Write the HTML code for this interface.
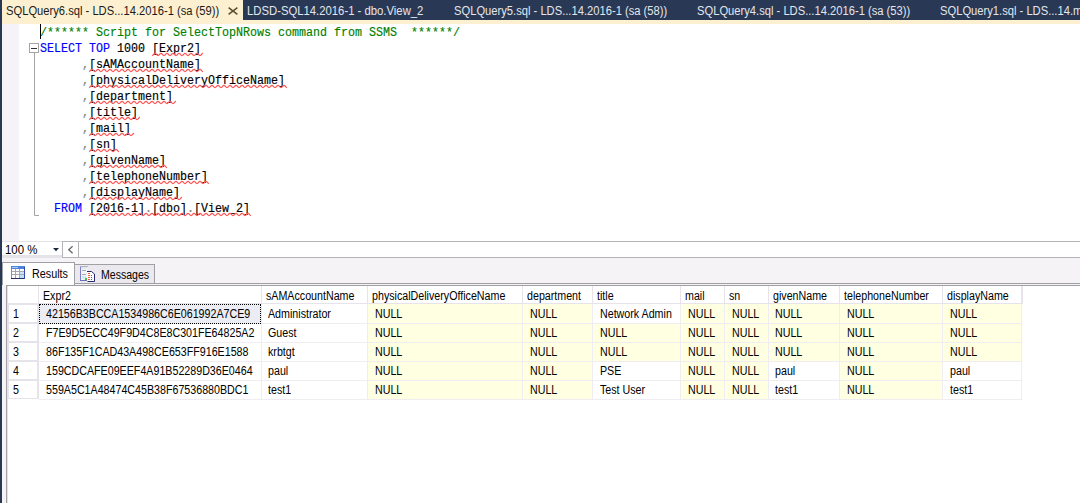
<!DOCTYPE html>
<html><head><meta charset="utf-8">
<style>
*{margin:0;padding:0;box-sizing:border-box}
html,body{width:1080px;height:503px;overflow:hidden;background:#fff;position:relative;font-family:"Liberation Sans",sans-serif}
.abs{position:absolute}
#navyL{left:0;top:0;width:2px;height:503px;background:#293955}
#tabs{left:0;top:0;width:1080px;height:20px;background:#293955}
.tt{position:absolute;top:4px;font-size:12px;line-height:14px;white-space:nowrap;transform:scaleX(0.932);transform-origin:0 0;color:#e4e6ec}
#atab{left:2px;top:0;width:241px;height:20px;background:#fdf0d0}
#cream{left:2px;top:20px;width:1078px;height:4px;background:#fdf0d0}
#editor{left:2px;top:24px;width:1078px;height:217px;background:#fff}
#gm{left:2px;top:24px;width:17px;height:217px;background:#f5f3f7}
.code{position:absolute;left:40px;font-family:"Liberation Mono",monospace;font-size:12.5px;line-height:16px;white-space:pre;color:#000;transform:scaleX(0.93333);transform-origin:0 0;-webkit-text-stroke:0.15px}
.kw{color:#0000ff}.cm{color:#008000}.gr{color:#808080}
#zoombar{left:2px;top:241px;width:1078px;height:17px;background:#fff;border-top:1px solid #e4e2e8}
#zcombo{left:2px;top:242px;width:59px;height:13px}
#zstrip{left:2px;top:255px;width:60px;height:3px;background:#e5e3e8}
#hsb{left:62px;top:241px;width:1018px;height:17px;border:1px solid #b9b9bd;border-right:none;background:#fff}
#hsbbtn{left:62px;top:241px;width:17px;height:17px;border:1px solid #b9b9bd;background:#fff}
#rtabs{left:2px;top:258px;width:1078px;height:27px;background:#f5f3f7}
#grid{left:6px;top:285px;width:1074px;height:218px;background:#fff;border-top:1px solid #a0a0a4;border-left:1px solid #a0a0a4}
.g{position:absolute;font-size:12px;line-height:13px;white-space:nowrap;color:#000;transform:scaleX(0.89);transform-origin:0 0}
</style></head><body>
<div id="navyL" class="abs"></div>
<div id="tabs" class="abs"></div>
<div id="atab" class="abs"></div>
<div id="cream" class="abs"></div>
<div class="tt" style="left:6px;color:#1a1a1a">SQLQuery6.sql - LDS...14.2016-1 (sa (59))</div>
<svg class="abs" style="left:228px;top:7px" width="10" height="8" viewBox="0 0 10 8"><path d="M0.6,0.6 L9.4,7.4 M9.4,0.6 L0.6,7.4" stroke="#5c4d2e" stroke-width="1.5"/></svg>
<div class="tt" style="left:247px;transform:scaleX(0.942)">LDSD-SQL14.2016-1 - dbo.View_2</div>
<div class="tt" style="left:454px">SQLQuery5.sql - LDS...14.2016-1 (sa (58))</div>
<div class="tt" style="left:697px">SQLQuery4.sql - LDS...14.2016-1 (sa (53))</div>
<div class="tt" style="left:940px">SQLQuery1.sql - LDS...14.m</div>

<div id="editor" class="abs"></div>
<div id="gm" class="abs"></div>
<div class="code" style="top:25px"><span class="cm">/****** Script for SelectTopNRows command from SSMS  ******/</span>
<span class="kw">SELECT</span> <span class="kw">TOP</span> 1000 [Expr2]
      <span class="gr">,</span>[sAMAccountName]
      <span class="gr">,</span>[physicalDeliveryOfficeName]
      <span class="gr">,</span>[department]
      <span class="gr">,</span>[title]
      <span class="gr">,</span>[mail]
      <span class="gr">,</span>[sn]
      <span class="gr">,</span>[givenName]
      <span class="gr">,</span>[telephoneNumber]
      <span class="gr">,</span>[displayName]
  <span class="kw">FROM</span> [2016-1]<span class="gr">.</span>[dbo]<span class="gr">.</span>[View_2]</div>
<svg class="abs" style="left:0;top:0" width="1080" height="241"><path d="M152,55.6 C153.5,55.6 153.5,53.4 155,53.4 C156.5,53.4 156.5,55.6 158,55.6 C159.5,55.6 159.5,53.4 161,53.4 C162.5,53.4 162.5,55.6 164,55.6 C165.5,55.6 165.5,53.4 167,53.4 C168.5,53.4 168.5,55.6 170,55.6 C171.5,55.6 171.5,53.4 173,53.4 C174.5,53.4 174.5,55.6 176,55.6 C177.5,55.6 177.5,53.4 179,53.4 C180.5,53.4 180.5,55.6 182,55.6 C183.5,55.6 183.5,53.4 185,53.4 C186.5,53.4 186.5,55.6 188,55.6 C189.5,55.6 189.5,53.4 191,53.4 C192.5,53.4 192.5,55.6 194,55.6 C195.5,55.6 195.5,53.4 197,53.4 C198.5,53.4 198.5,55.6 200,55.6 C201.5,55.6 201.5,53.4 203,53.4 M89,71.6 C90.5,71.6 90.5,69.4 92,69.4 C93.5,69.4 93.5,71.6 95,71.6 C96.5,71.6 96.5,69.4 98,69.4 C99.5,69.4 99.5,71.6 101,71.6 C102.5,71.6 102.5,69.4 104,69.4 C105.5,69.4 105.5,71.6 107,71.6 C108.5,71.6 108.5,69.4 110,69.4 C111.5,69.4 111.5,71.6 113,71.6 C114.5,71.6 114.5,69.4 116,69.4 C117.5,69.4 117.5,71.6 119,71.6 C120.5,71.6 120.5,69.4 122,69.4 C123.5,69.4 123.5,71.6 125,71.6 C126.5,71.6 126.5,69.4 128,69.4 C129.5,69.4 129.5,71.6 131,71.6 C132.5,71.6 132.5,69.4 134,69.4 C135.5,69.4 135.5,71.6 137,71.6 C138.5,71.6 138.5,69.4 140,69.4 C141.5,69.4 141.5,71.6 143,71.6 C144.5,71.6 144.5,69.4 146,69.4 C147.5,69.4 147.5,71.6 149,71.6 C150.5,71.6 150.5,69.4 152,69.4 C153.5,69.4 153.5,71.6 155,71.6 C156.5,71.6 156.5,69.4 158,69.4 C159.5,69.4 159.5,71.6 161,71.6 C162.5,71.6 162.5,69.4 164,69.4 C165.5,69.4 165.5,71.6 167,71.6 C168.5,71.6 168.5,69.4 170,69.4 C171.5,69.4 171.5,71.6 173,71.6 C174.5,71.6 174.5,69.4 176,69.4 C177.5,69.4 177.5,71.6 179,71.6 C180.5,71.6 180.5,69.4 182,69.4 C183.5,69.4 183.5,71.6 185,71.6 C186.5,71.6 186.5,69.4 188,69.4 C189.5,69.4 189.5,71.6 191,71.6 C192.5,71.6 192.5,69.4 194,69.4 C195.5,69.4 195.5,71.6 197,71.6 C198.5,71.6 198.5,69.4 200,69.4 C201.5,69.4 201.5,71.6 203,71.6 M89,87.6 C90.5,87.6 90.5,85.4 92,85.4 C93.5,85.4 93.5,87.6 95,87.6 C96.5,87.6 96.5,85.4 98,85.4 C99.5,85.4 99.5,87.6 101,87.6 C102.5,87.6 102.5,85.4 104,85.4 C105.5,85.4 105.5,87.6 107,87.6 C108.5,87.6 108.5,85.4 110,85.4 C111.5,85.4 111.5,87.6 113,87.6 C114.5,87.6 114.5,85.4 116,85.4 C117.5,85.4 117.5,87.6 119,87.6 C120.5,87.6 120.5,85.4 122,85.4 C123.5,85.4 123.5,87.6 125,87.6 C126.5,87.6 126.5,85.4 128,85.4 C129.5,85.4 129.5,87.6 131,87.6 C132.5,87.6 132.5,85.4 134,85.4 C135.5,85.4 135.5,87.6 137,87.6 C138.5,87.6 138.5,85.4 140,85.4 C141.5,85.4 141.5,87.6 143,87.6 C144.5,87.6 144.5,85.4 146,85.4 C147.5,85.4 147.5,87.6 149,87.6 C150.5,87.6 150.5,85.4 152,85.4 C153.5,85.4 153.5,87.6 155,87.6 C156.5,87.6 156.5,85.4 158,85.4 C159.5,85.4 159.5,87.6 161,87.6 C162.5,87.6 162.5,85.4 164,85.4 C165.5,85.4 165.5,87.6 167,87.6 C168.5,87.6 168.5,85.4 170,85.4 C171.5,85.4 171.5,87.6 173,87.6 C174.5,87.6 174.5,85.4 176,85.4 C177.5,85.4 177.5,87.6 179,87.6 C180.5,87.6 180.5,85.4 182,85.4 C183.5,85.4 183.5,87.6 185,87.6 C186.5,87.6 186.5,85.4 188,85.4 C189.5,85.4 189.5,87.6 191,87.6 C192.5,87.6 192.5,85.4 194,85.4 C195.5,85.4 195.5,87.6 197,87.6 C198.5,87.6 198.5,85.4 200,85.4 C201.5,85.4 201.5,87.6 203,87.6 C204.5,87.6 204.5,85.4 206,85.4 C207.5,85.4 207.5,87.6 209,87.6 C210.5,87.6 210.5,85.4 212,85.4 C213.5,85.4 213.5,87.6 215,87.6 C216.5,87.6 216.5,85.4 218,85.4 C219.5,85.4 219.5,87.6 221,87.6 C222.5,87.6 222.5,85.4 224,85.4 C225.5,85.4 225.5,87.6 227,87.6 C228.5,87.6 228.5,85.4 230,85.4 C231.5,85.4 231.5,87.6 233,87.6 C234.5,87.6 234.5,85.4 236,85.4 C237.5,85.4 237.5,87.6 239,87.6 C240.5,87.6 240.5,85.4 242,85.4 C243.5,85.4 243.5,87.6 245,87.6 C246.5,87.6 246.5,85.4 248,85.4 C249.5,85.4 249.5,87.6 251,87.6 C252.5,87.6 252.5,85.4 254,85.4 C255.5,85.4 255.5,87.6 257,87.6 C258.5,87.6 258.5,85.4 260,85.4 C261.5,85.4 261.5,87.6 263,87.6 C264.5,87.6 264.5,85.4 266,85.4 C267.5,85.4 267.5,87.6 269,87.6 C270.5,87.6 270.5,85.4 272,85.4 C273.5,85.4 273.5,87.6 275,87.6 C276.5,87.6 276.5,85.4 278,85.4 C279.5,85.4 279.5,87.6 281,87.6 C282.5,87.6 282.5,85.4 284,85.4 C285.5,85.4 285.5,87.6 287,87.6 M89,103.6 C90.5,103.6 90.5,101.4 92,101.4 C93.5,101.4 93.5,103.6 95,103.6 C96.5,103.6 96.5,101.4 98,101.4 C99.5,101.4 99.5,103.6 101,103.6 C102.5,103.6 102.5,101.4 104,101.4 C105.5,101.4 105.5,103.6 107,103.6 C108.5,103.6 108.5,101.4 110,101.4 C111.5,101.4 111.5,103.6 113,103.6 C114.5,103.6 114.5,101.4 116,101.4 C117.5,101.4 117.5,103.6 119,103.6 C120.5,103.6 120.5,101.4 122,101.4 C123.5,101.4 123.5,103.6 125,103.6 C126.5,103.6 126.5,101.4 128,101.4 C129.5,101.4 129.5,103.6 131,103.6 C132.5,103.6 132.5,101.4 134,101.4 C135.5,101.4 135.5,103.6 137,103.6 C138.5,103.6 138.5,101.4 140,101.4 C141.5,101.4 141.5,103.6 143,103.6 C144.5,103.6 144.5,101.4 146,101.4 C147.5,101.4 147.5,103.6 149,103.6 C150.5,103.6 150.5,101.4 152,101.4 C153.5,101.4 153.5,103.6 155,103.6 C156.5,103.6 156.5,101.4 158,101.4 C159.5,101.4 159.5,103.6 161,103.6 C162.5,103.6 162.5,101.4 164,101.4 C165.5,101.4 165.5,103.6 167,103.6 C168.5,103.6 168.5,101.4 170,101.4 C171.5,101.4 171.5,103.6 173,103.6 C174.5,103.6 174.5,101.4 176,101.4 M89,119.6 C90.5,119.6 90.5,117.4 92,117.4 C93.5,117.4 93.5,119.6 95,119.6 C96.5,119.6 96.5,117.4 98,117.4 C99.5,117.4 99.5,119.6 101,119.6 C102.5,119.6 102.5,117.4 104,117.4 C105.5,117.4 105.5,119.6 107,119.6 C108.5,119.6 108.5,117.4 110,117.4 C111.5,117.4 111.5,119.6 113,119.6 C114.5,119.6 114.5,117.4 116,117.4 C117.5,117.4 117.5,119.6 119,119.6 C120.5,119.6 120.5,117.4 122,117.4 C123.5,117.4 123.5,119.6 125,119.6 C126.5,119.6 126.5,117.4 128,117.4 C129.5,117.4 129.5,119.6 131,119.6 C132.5,119.6 132.5,117.4 134,117.4 C135.5,117.4 135.5,119.6 137,119.6 C138.5,119.6 138.5,117.4 140,117.4 M89,135.6 C90.5,135.6 90.5,133.4 92,133.4 C93.5,133.4 93.5,135.6 95,135.6 C96.5,135.6 96.5,133.4 98,133.4 C99.5,133.4 99.5,135.6 101,135.6 C102.5,135.6 102.5,133.4 104,133.4 C105.5,133.4 105.5,135.6 107,135.6 C108.5,135.6 108.5,133.4 110,133.4 C111.5,133.4 111.5,135.6 113,135.6 C114.5,135.6 114.5,133.4 116,133.4 C117.5,133.4 117.5,135.6 119,135.6 C120.5,135.6 120.5,133.4 122,133.4 C123.5,133.4 123.5,135.6 125,135.6 C126.5,135.6 126.5,133.4 128,133.4 C129.5,133.4 129.5,135.6 131,135.6 C132.5,135.6 132.5,133.4 134,133.4 M89,151.6 C90.5,151.6 90.5,149.4 92,149.4 C93.5,149.4 93.5,151.6 95,151.6 C96.5,151.6 96.5,149.4 98,149.4 C99.5,149.4 99.5,151.6 101,151.6 C102.5,151.6 102.5,149.4 104,149.4 C105.5,149.4 105.5,151.6 107,151.6 C108.5,151.6 108.5,149.4 110,149.4 C111.5,149.4 111.5,151.6 113,151.6 C114.5,151.6 114.5,149.4 116,149.4 C117.5,149.4 117.5,151.6 119,151.6 M89,167.6 C90.5,167.6 90.5,165.4 92,165.4 C93.5,165.4 93.5,167.6 95,167.6 C96.5,167.6 96.5,165.4 98,165.4 C99.5,165.4 99.5,167.6 101,167.6 C102.5,167.6 102.5,165.4 104,165.4 C105.5,165.4 105.5,167.6 107,167.6 C108.5,167.6 108.5,165.4 110,165.4 C111.5,165.4 111.5,167.6 113,167.6 C114.5,167.6 114.5,165.4 116,165.4 C117.5,165.4 117.5,167.6 119,167.6 C120.5,167.6 120.5,165.4 122,165.4 C123.5,165.4 123.5,167.6 125,167.6 C126.5,167.6 126.5,165.4 128,165.4 C129.5,165.4 129.5,167.6 131,167.6 C132.5,167.6 132.5,165.4 134,165.4 C135.5,165.4 135.5,167.6 137,167.6 C138.5,167.6 138.5,165.4 140,165.4 C141.5,165.4 141.5,167.6 143,167.6 C144.5,167.6 144.5,165.4 146,165.4 C147.5,165.4 147.5,167.6 149,167.6 C150.5,167.6 150.5,165.4 152,165.4 C153.5,165.4 153.5,167.6 155,167.6 C156.5,167.6 156.5,165.4 158,165.4 C159.5,165.4 159.5,167.6 161,167.6 C162.5,167.6 162.5,165.4 164,165.4 C165.5,165.4 165.5,167.6 167,167.6 M89,183.6 C90.5,183.6 90.5,181.4 92,181.4 C93.5,181.4 93.5,183.6 95,183.6 C96.5,183.6 96.5,181.4 98,181.4 C99.5,181.4 99.5,183.6 101,183.6 C102.5,183.6 102.5,181.4 104,181.4 C105.5,181.4 105.5,183.6 107,183.6 C108.5,183.6 108.5,181.4 110,181.4 C111.5,181.4 111.5,183.6 113,183.6 C114.5,183.6 114.5,181.4 116,181.4 C117.5,181.4 117.5,183.6 119,183.6 C120.5,183.6 120.5,181.4 122,181.4 C123.5,181.4 123.5,183.6 125,183.6 C126.5,183.6 126.5,181.4 128,181.4 C129.5,181.4 129.5,183.6 131,183.6 C132.5,183.6 132.5,181.4 134,181.4 C135.5,181.4 135.5,183.6 137,183.6 C138.5,183.6 138.5,181.4 140,181.4 C141.5,181.4 141.5,183.6 143,183.6 C144.5,183.6 144.5,181.4 146,181.4 C147.5,181.4 147.5,183.6 149,183.6 C150.5,183.6 150.5,181.4 152,181.4 C153.5,181.4 153.5,183.6 155,183.6 C156.5,183.6 156.5,181.4 158,181.4 C159.5,181.4 159.5,183.6 161,183.6 C162.5,183.6 162.5,181.4 164,181.4 C165.5,181.4 165.5,183.6 167,183.6 C168.5,183.6 168.5,181.4 170,181.4 C171.5,181.4 171.5,183.6 173,183.6 C174.5,183.6 174.5,181.4 176,181.4 C177.5,181.4 177.5,183.6 179,183.6 C180.5,183.6 180.5,181.4 182,181.4 C183.5,181.4 183.5,183.6 185,183.6 C186.5,183.6 186.5,181.4 188,181.4 C189.5,181.4 189.5,183.6 191,183.6 C192.5,183.6 192.5,181.4 194,181.4 C195.5,181.4 195.5,183.6 197,183.6 C198.5,183.6 198.5,181.4 200,181.4 C201.5,181.4 201.5,183.6 203,183.6 C204.5,183.6 204.5,181.4 206,181.4 C207.5,181.4 207.5,183.6 209,183.6 M89,199.6 C90.5,199.6 90.5,197.4 92,197.4 C93.5,197.4 93.5,199.6 95,199.6 C96.5,199.6 96.5,197.4 98,197.4 C99.5,197.4 99.5,199.6 101,199.6 C102.5,199.6 102.5,197.4 104,197.4 C105.5,197.4 105.5,199.6 107,199.6 C108.5,199.6 108.5,197.4 110,197.4 C111.5,197.4 111.5,199.6 113,199.6 C114.5,199.6 114.5,197.4 116,197.4 C117.5,197.4 117.5,199.6 119,199.6 C120.5,199.6 120.5,197.4 122,197.4 C123.5,197.4 123.5,199.6 125,199.6 C126.5,199.6 126.5,197.4 128,197.4 C129.5,197.4 129.5,199.6 131,199.6 C132.5,199.6 132.5,197.4 134,197.4 C135.5,197.4 135.5,199.6 137,199.6 C138.5,199.6 138.5,197.4 140,197.4 C141.5,197.4 141.5,199.6 143,199.6 C144.5,199.6 144.5,197.4 146,197.4 C147.5,197.4 147.5,199.6 149,199.6 C150.5,199.6 150.5,197.4 152,197.4 C153.5,197.4 153.5,199.6 155,199.6 C156.5,199.6 156.5,197.4 158,197.4 C159.5,197.4 159.5,199.6 161,199.6 C162.5,199.6 162.5,197.4 164,197.4 C165.5,197.4 165.5,199.6 167,199.6 C168.5,199.6 168.5,197.4 170,197.4 C171.5,197.4 171.5,199.6 173,199.6 C174.5,199.6 174.5,197.4 176,197.4 C177.5,197.4 177.5,199.6 179,199.6 C180.5,199.6 180.5,197.4 182,197.4 M89,215.6 C90.5,215.6 90.5,213.4 92,213.4 C93.5,213.4 93.5,215.6 95,215.6 C96.5,215.6 96.5,213.4 98,213.4 C99.5,213.4 99.5,215.6 101,215.6 C102.5,215.6 102.5,213.4 104,213.4 C105.5,213.4 105.5,215.6 107,215.6 C108.5,215.6 108.5,213.4 110,213.4 C111.5,213.4 111.5,215.6 113,215.6 C114.5,215.6 114.5,213.4 116,213.4 C117.5,213.4 117.5,215.6 119,215.6 C120.5,215.6 120.5,213.4 122,213.4 C123.5,213.4 123.5,215.6 125,215.6 C126.5,215.6 126.5,213.4 128,213.4 C129.5,213.4 129.5,215.6 131,215.6 C132.5,215.6 132.5,213.4 134,213.4 C135.5,213.4 135.5,215.6 137,215.6 C138.5,215.6 138.5,213.4 140,213.4 C141.5,213.4 141.5,215.6 143,215.6 C144.5,215.6 144.5,213.4 146,213.4 C147.5,213.4 147.5,215.6 149,215.6 C150.5,215.6 150.5,213.4 152,213.4 C153.5,213.4 153.5,215.6 155,215.6 C156.5,215.6 156.5,213.4 158,213.4 C159.5,213.4 159.5,215.6 161,215.6 C162.5,215.6 162.5,213.4 164,213.4 C165.5,213.4 165.5,215.6 167,215.6 C168.5,215.6 168.5,213.4 170,213.4 C171.5,213.4 171.5,215.6 173,215.6 C174.5,215.6 174.5,213.4 176,213.4 C177.5,213.4 177.5,215.6 179,215.6 C180.5,215.6 180.5,213.4 182,213.4 C183.5,213.4 183.5,215.6 185,215.6 C186.5,215.6 186.5,213.4 188,213.4 C189.5,213.4 189.5,215.6 191,215.6 C192.5,215.6 192.5,213.4 194,213.4 C195.5,213.4 195.5,215.6 197,215.6 C198.5,215.6 198.5,213.4 200,213.4 C201.5,213.4 201.5,215.6 203,215.6 C204.5,215.6 204.5,213.4 206,213.4 C207.5,213.4 207.5,215.6 209,215.6 C210.5,215.6 210.5,213.4 212,213.4 C213.5,213.4 213.5,215.6 215,215.6 C216.5,215.6 216.5,213.4 218,213.4 C219.5,213.4 219.5,215.6 221,215.6 C222.5,215.6 222.5,213.4 224,213.4 C225.5,213.4 225.5,215.6 227,215.6 C228.5,215.6 228.5,213.4 230,213.4 C231.5,213.4 231.5,215.6 233,215.6 C234.5,215.6 234.5,213.4 236,213.4 C237.5,213.4 237.5,215.6 239,215.6 C240.5,215.6 240.5,213.4 242,213.4 C243.5,213.4 243.5,215.6 245,215.6 C246.5,215.6 246.5,213.4 248,213.4 C249.5,213.4 249.5,215.6 251,215.6" fill="none" stroke="#ff5a5a" stroke-width="1.3"/><rect x="29.5" y="43.5" width="9" height="9" fill="#fff" stroke="#a5a5a5" stroke-width="1"/><path d="M31,48.5 h6" stroke="#303030" stroke-width="1"/><path d="M34.5,53 V215.5 H39" fill="none" stroke="#a5a5a5" stroke-width="1"/><rect x="40" y="24" width="1" height="15" fill="#000"/></svg>

<div id="zoombar" class="abs"></div>
<div id="zstrip" class="abs"></div>
<div class="abs" style="left:2px;top:258px;width:1078px;height:27px;background:#f6f3f6"></div>
<div class="abs" style="left:62px;top:241px;width:1018px;height:17px;border:1px solid #b4b4b8;border-right:none;background:#fff"></div>
<div class="abs" style="left:62px;top:241px;width:17px;height:17px;border:1px solid #b4b4b8;background:#fff"></div>
<svg class="abs" style="left:66px;top:244px" width="10" height="11"><path d="M6.6,2.3 L2.8,5.8 L6.6,9.3" fill="none" stroke="#6a6a6a" stroke-width="1.4"/></svg>
<div class="g" style="left:5px;top:244px;transform:scaleX(0.95)">100 %</div>
<svg class="abs" style="left:53px;top:248px" width="7" height="4"><path d="M0,0 H6 L3,3.2 Z" fill="#1c2840"/></svg>

<!-- results tabs -->
<div class="abs" style="left:2px;top:283px;width:1078px;height:1px;background:#a0a0a4"></div>
<div class="abs" style="left:74px;top:264px;width:81px;height:20px;background:#ebe9ee;border:1px solid #a0a0a4;border-left:none"></div>
<div class="abs" style="left:2px;top:262px;width:73px;height:24px;background:#fff;border:1px solid #a0a0a4;border-bottom:none"></div>
<div class="g" style="left:32px;top:268px;transform:scaleX(0.9)">Results</div>
<div class="g" style="left:101px;top:269px;transform:scaleX(0.88)">Messages</div>


<svg class="abs" style="left:11px;top:266px" width="15" height="14" viewBox="0 0 15 14">
<rect x="0" y="0" width="14" height="13" fill="#fff"/>
<rect x="0" y="0" width="14" height="3" fill="#4a82dc"/>
<rect x="1" y="1" width="6" height="1" fill="#b0cdf2"/>
<rect x="0" y="3" width="1" height="10" fill="#909096"/>
<path d="M4.5,3 V12 M8.5,3 V12 M1,5.5 H13 M1,8.5 H13" stroke="#a6a6ae" stroke-width="1"/>
<rect x="0" y="12" width="14" height="1" fill="#262f6a"/>
<rect x="13" y="1" width="1" height="12" fill="#3548b0"/>
<rect x="9" y="6" width="4" height="2" fill="#cfe6fa"/>
<rect x="9" y="9" width="4" height="3" fill="#bfe0fa"/>
</svg>
<svg class="abs" style="left:80px;top:266px" width="15" height="17" viewBox="0 0 15 17">
<rect x="0" y="0" width="8" height="15" fill="#f2f4f8"/>
<rect x="0" y="0" width="1" height="15" fill="#7a7fc8"/>
<rect x="0" y="0" width="8" height="1" fill="#b0b0c0"/>
<rect x="0" y="14" width="8" height="1" fill="#6a70b8"/>
<rect x="1" y="1" width="6" height="2" fill="#dfe6ee"/>
<path d="M2,4.5 H6 M2,8.5 H6" stroke="#a4a8b4" stroke-width="1"/>
<rect x="2" y="10" width="4" height="3" fill="#d2eaf8"/>
<rect x="5" y="12" width="2" height="2" fill="#3cc04a"/>
<path d="M7,5 H12 L14,7.5 V15.5 H7 Z" fill="#fdfdff"/>
<path d="M7,5.5 H11.5 L14.5,8 V15.5 H7.5" fill="none" stroke="#25296a" stroke-width="1"/>
<path d="M8,7.5 H10 M8,9.5 H10 M8,11.5 H10 M8,13.5 H10" stroke="#f0603c" stroke-width="1"/>
<path d="M11,9.5 H12 M11,11.5 H12 M11,13.5 H12" stroke="#2f8a36" stroke-width="1"/>
</svg>

<!-- grid -->
<div class="abs" style="left:2px;top:285px;width:4px;height:218px;background:#f6f3f6"></div>
<div id="grid" class="abs"></div>
<div class="abs" style="left:7px;top:286px;width:1px;height:217px;background:#e4e2e6"></div>
<!--GRID-->
<div class="abs" style="left:8px;top:286px;width:32px;height:18px;background:#fff;border-right:2px solid #e6e4ea;border-bottom:1px solid #e6e4ea"></div>
<div class="abs" style="left:39px;top:286px;width:224px;height:18px;background:#fff;border-right:2px solid #e6e4ea;border-bottom:1px solid #e6e4ea"></div>
<div class="g" style="left:43px;top:290px">Expr2</div>
<div class="abs" style="left:262px;top:286px;width:107px;height:18px;background:#fff;border-right:2px solid #e6e4ea;border-bottom:1px solid #e6e4ea"></div>
<div class="g" style="left:266px;top:290px">sAMAccountName</div>
<div class="abs" style="left:368px;top:286px;width:156px;height:18px;background:#fff;border-right:2px solid #e6e4ea;border-bottom:1px solid #e6e4ea"></div>
<div class="g" style="left:372px;top:290px">physicalDeliveryOfficeName</div>
<div class="abs" style="left:523px;top:286px;width:71px;height:18px;background:#fff;border-right:2px solid #e6e4ea;border-bottom:1px solid #e6e4ea"></div>
<div class="g" style="left:527px;top:290px">department</div>
<div class="abs" style="left:593px;top:286px;width:89px;height:18px;background:#fff;border-right:2px solid #e6e4ea;border-bottom:1px solid #e6e4ea"></div>
<div class="g" style="left:597px;top:290px">title</div>
<div class="abs" style="left:681px;top:286px;width:45px;height:18px;background:#fff;border-right:2px solid #e6e4ea;border-bottom:1px solid #e6e4ea"></div>
<div class="g" style="left:685px;top:290px">mail</div>
<div class="abs" style="left:725px;top:286px;width:45px;height:18px;background:#fff;border-right:2px solid #e6e4ea;border-bottom:1px solid #e6e4ea"></div>
<div class="g" style="left:729px;top:290px">sn</div>
<div class="abs" style="left:769px;top:286px;width:72px;height:18px;background:#fff;border-right:2px solid #e6e4ea;border-bottom:1px solid #e6e4ea"></div>
<div class="g" style="left:773px;top:290px">givenName</div>
<div class="abs" style="left:840px;top:286px;width:104px;height:18px;background:#fff;border-right:2px solid #e6e4ea;border-bottom:1px solid #e6e4ea"></div>
<div class="g" style="left:844px;top:290px">telephoneNumber</div>
<div class="abs" style="left:943px;top:286px;width:80px;height:18px;background:#fff;border-right:2px solid #e6e4ea;border-bottom:1px solid #e6e4ea"></div>
<div class="g" style="left:947px;top:290px">displayName</div>
<div class="abs" style="left:8px;top:304px;width:31px;height:19px;background:#fff;border:1px solid #e6e4ea;border-right:2px solid #e6e4ea"></div>
<div class="g" style="left:13px;top:308px">1</div>
<div class="abs" style="left:39px;top:304px;width:223px;height:19px;background:#ececf4;border-right:1px solid #efedf2;height:20px;"></div>
<div class="g" style="left:46px;top:308px">42156B3BCCA1534986C6E061992A7CE9</div>
<div class="abs" style="left:262px;top:304px;width:106px;height:19px;background:#fff;border-right:1px solid #efedf2;"></div>
<div class="g" style="left:268px;top:308px">Administrator</div>
<div class="abs" style="left:368px;top:304px;width:155px;height:19px;background:#ffffe1;border-right:1px solid #efedf2;"></div>
<div class="g" style="left:374.5px;top:308px">NULL</div>
<div class="abs" style="left:523px;top:304px;width:70px;height:19px;background:#ffffe1;border-right:1px solid #efedf2;"></div>
<div class="g" style="left:529.5px;top:308px">NULL</div>
<div class="abs" style="left:593px;top:304px;width:88px;height:19px;background:#fff;border-right:1px solid #efedf2;"></div>
<div class="g" style="left:599.5px;top:308px">Network Admin</div>
<div class="abs" style="left:681px;top:304px;width:44px;height:19px;background:#ffffe1;border-right:1px solid #efedf2;"></div>
<div class="g" style="left:687.5px;top:308px">NULL</div>
<div class="abs" style="left:725px;top:304px;width:44px;height:19px;background:#ffffe1;border-right:1px solid #efedf2;"></div>
<div class="g" style="left:731.5px;top:308px">NULL</div>
<div class="abs" style="left:769px;top:304px;width:71px;height:19px;background:#ffffe1;border-right:1px solid #efedf2;"></div>
<div class="g" style="left:775px;top:308px">NULL</div>
<div class="abs" style="left:840px;top:304px;width:103px;height:19px;background:#ffffe1;border-right:1px solid #efedf2;"></div>
<div class="g" style="left:846.5px;top:308px">NULL</div>
<div class="abs" style="left:943px;top:304px;width:79px;height:19px;background:#ffffe1;border-right:1px solid #efedf2;"></div>
<div class="g" style="left:949.5px;top:308px">NULL</div>
<div class="abs" style="left:8px;top:323px;width:31px;height:19px;background:#fff;border:1px solid #e6e4ea;border-right:2px solid #e6e4ea"></div>
<div class="g" style="left:13px;top:327px">2</div>
<div class="abs" style="left:39px;top:323px;width:223px;height:19px;background:#fff;border-right:1px solid #efedf2;"></div>
<div class="g" style="left:46px;top:327px">F7E9D5ECC49F9D4C8E8C301FE64825A2</div>
<div class="abs" style="left:262px;top:323px;width:106px;height:19px;background:#fff;border-right:1px solid #efedf2;"></div>
<div class="g" style="left:268px;top:327px">Guest</div>
<div class="abs" style="left:368px;top:323px;width:155px;height:19px;background:#ffffe1;border-right:1px solid #efedf2;"></div>
<div class="g" style="left:374.5px;top:327px">NULL</div>
<div class="abs" style="left:523px;top:323px;width:70px;height:19px;background:#ffffe1;border-right:1px solid #efedf2;"></div>
<div class="g" style="left:529.5px;top:327px">NULL</div>
<div class="abs" style="left:593px;top:323px;width:88px;height:19px;background:#ffffe1;border-right:1px solid #efedf2;"></div>
<div class="g" style="left:599.5px;top:327px">NULL</div>
<div class="abs" style="left:681px;top:323px;width:44px;height:19px;background:#ffffe1;border-right:1px solid #efedf2;"></div>
<div class="g" style="left:687.5px;top:327px">NULL</div>
<div class="abs" style="left:725px;top:323px;width:44px;height:19px;background:#ffffe1;border-right:1px solid #efedf2;"></div>
<div class="g" style="left:731.5px;top:327px">NULL</div>
<div class="abs" style="left:769px;top:323px;width:71px;height:19px;background:#ffffe1;border-right:1px solid #efedf2;"></div>
<div class="g" style="left:775px;top:327px">NULL</div>
<div class="abs" style="left:840px;top:323px;width:103px;height:19px;background:#ffffe1;border-right:1px solid #efedf2;"></div>
<div class="g" style="left:846.5px;top:327px">NULL</div>
<div class="abs" style="left:943px;top:323px;width:79px;height:19px;background:#ffffe1;border-right:1px solid #efedf2;"></div>
<div class="g" style="left:949.5px;top:327px">NULL</div>
<div class="abs" style="left:8px;top:342px;width:31px;height:19px;background:#fff;border:1px solid #e6e4ea;border-right:2px solid #e6e4ea"></div>
<div class="g" style="left:13px;top:346px">3</div>
<div class="abs" style="left:39px;top:342px;width:223px;height:19px;background:#fff;border-right:1px solid #efedf2;"></div>
<div class="g" style="left:46px;top:346px">86F135F1CAD43A498CE653FF916E1588</div>
<div class="abs" style="left:262px;top:342px;width:106px;height:19px;background:#fff;border-right:1px solid #efedf2;"></div>
<div class="g" style="left:268px;top:346px">krbtgt</div>
<div class="abs" style="left:368px;top:342px;width:155px;height:19px;background:#ffffe1;border-right:1px solid #efedf2;"></div>
<div class="g" style="left:374.5px;top:346px">NULL</div>
<div class="abs" style="left:523px;top:342px;width:70px;height:19px;background:#ffffe1;border-right:1px solid #efedf2;"></div>
<div class="g" style="left:529.5px;top:346px">NULL</div>
<div class="abs" style="left:593px;top:342px;width:88px;height:19px;background:#ffffe1;border-right:1px solid #efedf2;"></div>
<div class="g" style="left:599.5px;top:346px">NULL</div>
<div class="abs" style="left:681px;top:342px;width:44px;height:19px;background:#ffffe1;border-right:1px solid #efedf2;"></div>
<div class="g" style="left:687.5px;top:346px">NULL</div>
<div class="abs" style="left:725px;top:342px;width:44px;height:19px;background:#ffffe1;border-right:1px solid #efedf2;"></div>
<div class="g" style="left:731.5px;top:346px">NULL</div>
<div class="abs" style="left:769px;top:342px;width:71px;height:19px;background:#ffffe1;border-right:1px solid #efedf2;"></div>
<div class="g" style="left:775px;top:346px">NULL</div>
<div class="abs" style="left:840px;top:342px;width:103px;height:19px;background:#ffffe1;border-right:1px solid #efedf2;"></div>
<div class="g" style="left:846.5px;top:346px">NULL</div>
<div class="abs" style="left:943px;top:342px;width:79px;height:19px;background:#ffffe1;border-right:1px solid #efedf2;"></div>
<div class="g" style="left:949.5px;top:346px">NULL</div>
<div class="abs" style="left:8px;top:361px;width:31px;height:19px;background:#fff;border:1px solid #e6e4ea;border-right:2px solid #e6e4ea"></div>
<div class="g" style="left:13px;top:365px">4</div>
<div class="abs" style="left:39px;top:361px;width:223px;height:19px;background:#fff;border-right:1px solid #efedf2;"></div>
<div class="g" style="left:46px;top:365px">159CDCAFE09EEF4A91B52289D36E0464</div>
<div class="abs" style="left:262px;top:361px;width:106px;height:19px;background:#fff;border-right:1px solid #efedf2;"></div>
<div class="g" style="left:268px;top:365px">paul</div>
<div class="abs" style="left:368px;top:361px;width:155px;height:19px;background:#ffffe1;border-right:1px solid #efedf2;"></div>
<div class="g" style="left:374.5px;top:365px">NULL</div>
<div class="abs" style="left:523px;top:361px;width:70px;height:19px;background:#ffffe1;border-right:1px solid #efedf2;"></div>
<div class="g" style="left:529.5px;top:365px">NULL</div>
<div class="abs" style="left:593px;top:361px;width:88px;height:19px;background:#fff;border-right:1px solid #efedf2;"></div>
<div class="g" style="left:599.5px;top:365px">PSE</div>
<div class="abs" style="left:681px;top:361px;width:44px;height:19px;background:#ffffe1;border-right:1px solid #efedf2;"></div>
<div class="g" style="left:687.5px;top:365px">NULL</div>
<div class="abs" style="left:725px;top:361px;width:44px;height:19px;background:#ffffe1;border-right:1px solid #efedf2;"></div>
<div class="g" style="left:731.5px;top:365px">NULL</div>
<div class="abs" style="left:769px;top:361px;width:71px;height:19px;background:#fff;border-right:1px solid #efedf2;"></div>
<div class="g" style="left:775px;top:365px">paul</div>
<div class="abs" style="left:840px;top:361px;width:103px;height:19px;background:#ffffe1;border-right:1px solid #efedf2;"></div>
<div class="g" style="left:846.5px;top:365px">NULL</div>
<div class="abs" style="left:943px;top:361px;width:79px;height:19px;background:#fff;border-right:1px solid #efedf2;"></div>
<div class="g" style="left:949.5px;top:365px">paul</div>
<div class="abs" style="left:8px;top:380px;width:31px;height:19px;background:#fff;border:1px solid #e6e4ea;border-right:2px solid #e6e4ea"></div>
<div class="g" style="left:13px;top:384px">5</div>
<div class="abs" style="left:39px;top:380px;width:223px;height:19px;background:#fff;border-right:1px solid #efedf2;"></div>
<div class="g" style="left:46px;top:384px">559A5C1A48474C45B38F67536880BDC1</div>
<div class="abs" style="left:262px;top:380px;width:106px;height:19px;background:#fff;border-right:1px solid #efedf2;"></div>
<div class="g" style="left:268px;top:384px">test1</div>
<div class="abs" style="left:368px;top:380px;width:155px;height:19px;background:#ffffe1;border-right:1px solid #efedf2;"></div>
<div class="g" style="left:374.5px;top:384px">NULL</div>
<div class="abs" style="left:523px;top:380px;width:70px;height:19px;background:#ffffe1;border-right:1px solid #efedf2;"></div>
<div class="g" style="left:529.5px;top:384px">NULL</div>
<div class="abs" style="left:593px;top:380px;width:88px;height:19px;background:#fff;border-right:1px solid #efedf2;"></div>
<div class="g" style="left:599.5px;top:384px">Test User</div>
<div class="abs" style="left:681px;top:380px;width:44px;height:19px;background:#ffffe1;border-right:1px solid #efedf2;"></div>
<div class="g" style="left:687.5px;top:384px">NULL</div>
<div class="abs" style="left:725px;top:380px;width:44px;height:19px;background:#ffffe1;border-right:1px solid #efedf2;"></div>
<div class="g" style="left:731.5px;top:384px">NULL</div>
<div class="abs" style="left:769px;top:380px;width:71px;height:19px;background:#fff;border-right:1px solid #efedf2;"></div>
<div class="g" style="left:775px;top:384px">test1</div>
<div class="abs" style="left:840px;top:380px;width:103px;height:19px;background:#ffffe1;border-right:1px solid #efedf2;"></div>
<div class="g" style="left:846.5px;top:384px">NULL</div>
<div class="abs" style="left:943px;top:380px;width:79px;height:19px;background:#fff;border-right:1px solid #efedf2;"></div>
<div class="g" style="left:949.5px;top:384px">test1</div>
<div class="abs" style="left:39px;top:323px;width:983px;height:1px;background:#efedf2"></div>
<div class="abs" style="left:39px;top:342px;width:983px;height:1px;background:#efedf2"></div>
<div class="abs" style="left:39px;top:361px;width:983px;height:1px;background:#efedf2"></div>
<div class="abs" style="left:39px;top:380px;width:983px;height:1px;background:#efedf2"></div>
<div class="abs" style="left:39px;top:399px;width:983px;height:1px;background:#efedf2"></div>
<div class="abs" style="left:39px;top:304px;width:222px;height:20px;outline:1px dotted #000;outline-offset:-1px"></div>
<!--/GRID-->
<!--/GRID-->
<!--/GRID-->
<!--/GRID-->
<!--/GRID-->
<!--/GRID-->
</body></html>
